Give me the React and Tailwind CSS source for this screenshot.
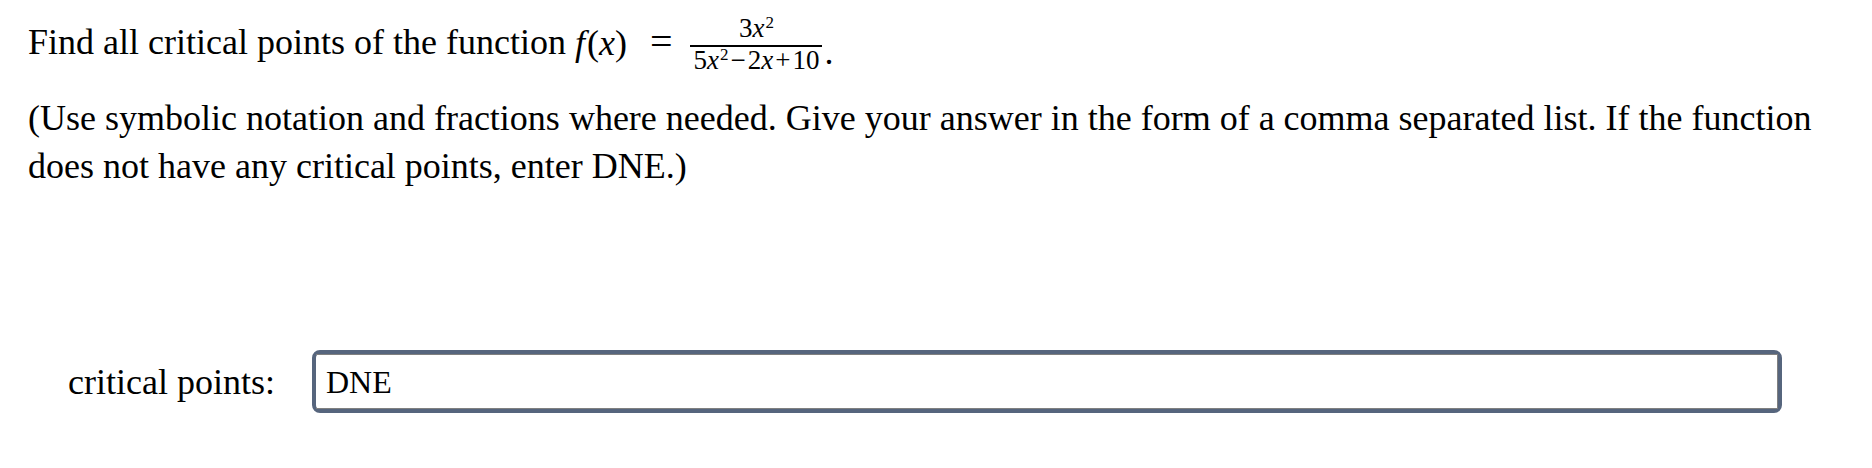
import React from 'react';

const serif = "font-['Liberation_Serif','Times_New_Roman',serif]";

function Sq() {
  return <sup className="text-[17px] ml-[1px]">2</sup>;
}

function Frac() {
  return (
    <span className="flex flex-col items-center ml-[18px] mr-[14px] mt-[4px] text-[27px] leading-none">
      <span className="px-[4px] pb-[3px]">
        3<i>x</i>
        <Sq />
      </span>
      <span className="self-stretch h-[2px] bg-black" />
      <span className="px-[3px]">
        5<i>x</i>
        <Sq />
        <span className="mx-[2px]">−</span>2<i>x</i>
        <span className="mx-[2px]">+</span>10
      </span>
    </span>
  );
}

export default function App() {
  return (
    <div className={`${serif} bg-white text-black min-h-screen pl-[28px] pt-[7px]`}>
      <div className="flex items-center h-[70px] text-[36px] leading-none whitespace-nowrap">
        <span>Find all critical points of the function&nbsp;</span>
        <span>
          <i>f</i>
          <span className="ml-[2px]">(</span>
          <i>x</i>
          <span className="mr-[1px]">)</span>
          <span className="ml-[22px] text-[40px]">=</span>
        </span>
        <Frac />
        <span className="ml-[-12px] mt-[20px]">.</span>
      </div>

      <p className="mt-[17px] text-[36px] leading-[48px] whitespace-nowrap">
        (Use symbolic notation and fractions where needed. Give your answer in the form of a comma separated list. If the function
        <br />
        does not have any critical points, enter DNE.)
      </p>

      <div className="flex items-center mt-[160px] pl-[40px]">
        <label className="text-[36px] leading-none">critical points:</label>
        <div className="ml-[37px] w-[1470px] h-[63px] border-4 border-[#56657d] rounded-[8px]">
          <div className="h-full flex items-center pl-[10px] border-t border-r border-b border-[#808080] text-[32px]">
            DNE
          </div>
        </div>
      </div>
    </div>
  );
}
